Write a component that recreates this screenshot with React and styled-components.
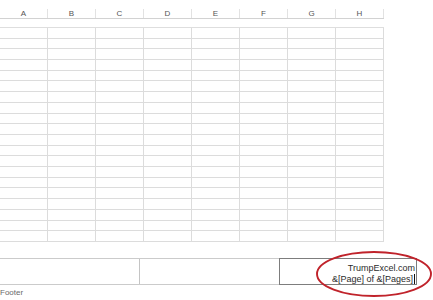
import React from 'react';
import styled, { createGlobalStyle } from 'styled-components';

const GlobalStyle = createGlobalStyle`
  body {
    margin: 0;
    background: #fff;
    font-family: "Liberation Sans", Arial, sans-serif;
  }
`;

const COLUMNS = ['A', 'B', 'C', 'D', 'E', 'F', 'G', 'H'];
const ROWS = 20;

const Page = styled.div`
  position: relative;
  width: 433px;
  height: 300px;
  overflow: hidden;
  display: flex;
  flex-direction: column;
`;

const HeaderRow = styled.div`
  display: grid;
  grid-template-columns: repeat(8, 48px);
  width: 384px;
  height: 9px;
  margin-top: 9px;
  border-bottom: 1px solid #d2d2d2;
`;

const HeaderCell = styled.div`
  border-right: 1px solid #e2e2e2;
  font-size: 8px;
  line-height: 9px;
  color: #555;
  text-align: center;
`;

const Grid = styled.div`
  display: grid;
  grid-template-columns: repeat(8, 48px);
  grid-template-rows: repeat(${ROWS}, 1fr);
  width: 384px;
  height: 215px;
  margin-top: 8px;
  border-top: 1px solid #dedede;
  box-sizing: border-box;
`;

const Cell = styled.div`
  border-right: 1px solid #dcdcdc;
  border-bottom: 1px solid #dcdcdc;
`;

const FooterRow = styled.div`
  display: flex;
  width: 417px;
  height: 27px;
  margin-top: 16px;
  border-top: 1px solid #cbcbcb;
  border-bottom: 1px solid #cbcbcb;
  box-sizing: border-box;
`;

const FooterCell = styled.div`
  width: ${p => p.$width}px;
  border-left: ${p => (p.$first ? 'none' : '1px solid #c4c4c4')};
  box-sizing: border-box;
`;

const ActiveCell = styled.div`
  flex: 1;
  margin: -1px 0;
  border: 1px solid #7d7d7d;
  padding: 4px 1px 0 0;
  text-align: right;
  font-size: 9px;
  line-height: 11px;
  color: #2b2b2b;
`;

const Caret = styled.span`
  display: inline-block;
  width: 1px;
  height: 10px;
  margin-left: 1px;
  vertical-align: -2px;
  background: #111;
`;

const Label = styled.div`
  margin-top: 3px;
  font-size: 8px;
  color: #6a6a6a;
`;

const Ring = styled.svg`
  position: absolute;
  left: 315px;
  top: 250px;
`;

export default function App() {
  return (
    <Page>
      <GlobalStyle />
      <HeaderRow>
        {COLUMNS.map(c => (
          <HeaderCell key={c}>{c}</HeaderCell>
        ))}
      </HeaderRow>
      <Grid>
        {Array.from({ length: ROWS * COLUMNS.length }).map((_, i) => (
          <Cell key={i} />
        ))}
      </Grid>
      <FooterRow>
        <FooterCell $width={139} $first />
        <FooterCell $width={140} />
        <ActiveCell>
          TrumpExcel.com
          <br />
          &amp;[Page] of &amp;[Pages]<Caret />
        </ActiveCell>
      </FooterRow>
      <Label>Footer</Label>
      <Ring width="118" height="48" viewBox="0 0 118 48">
        <ellipse cx="59" cy="24" rx="57" ry="22" fill="none" stroke="#c0232b" strokeWidth="1.9" />
      </Ring>
    </Page>
  );
}
